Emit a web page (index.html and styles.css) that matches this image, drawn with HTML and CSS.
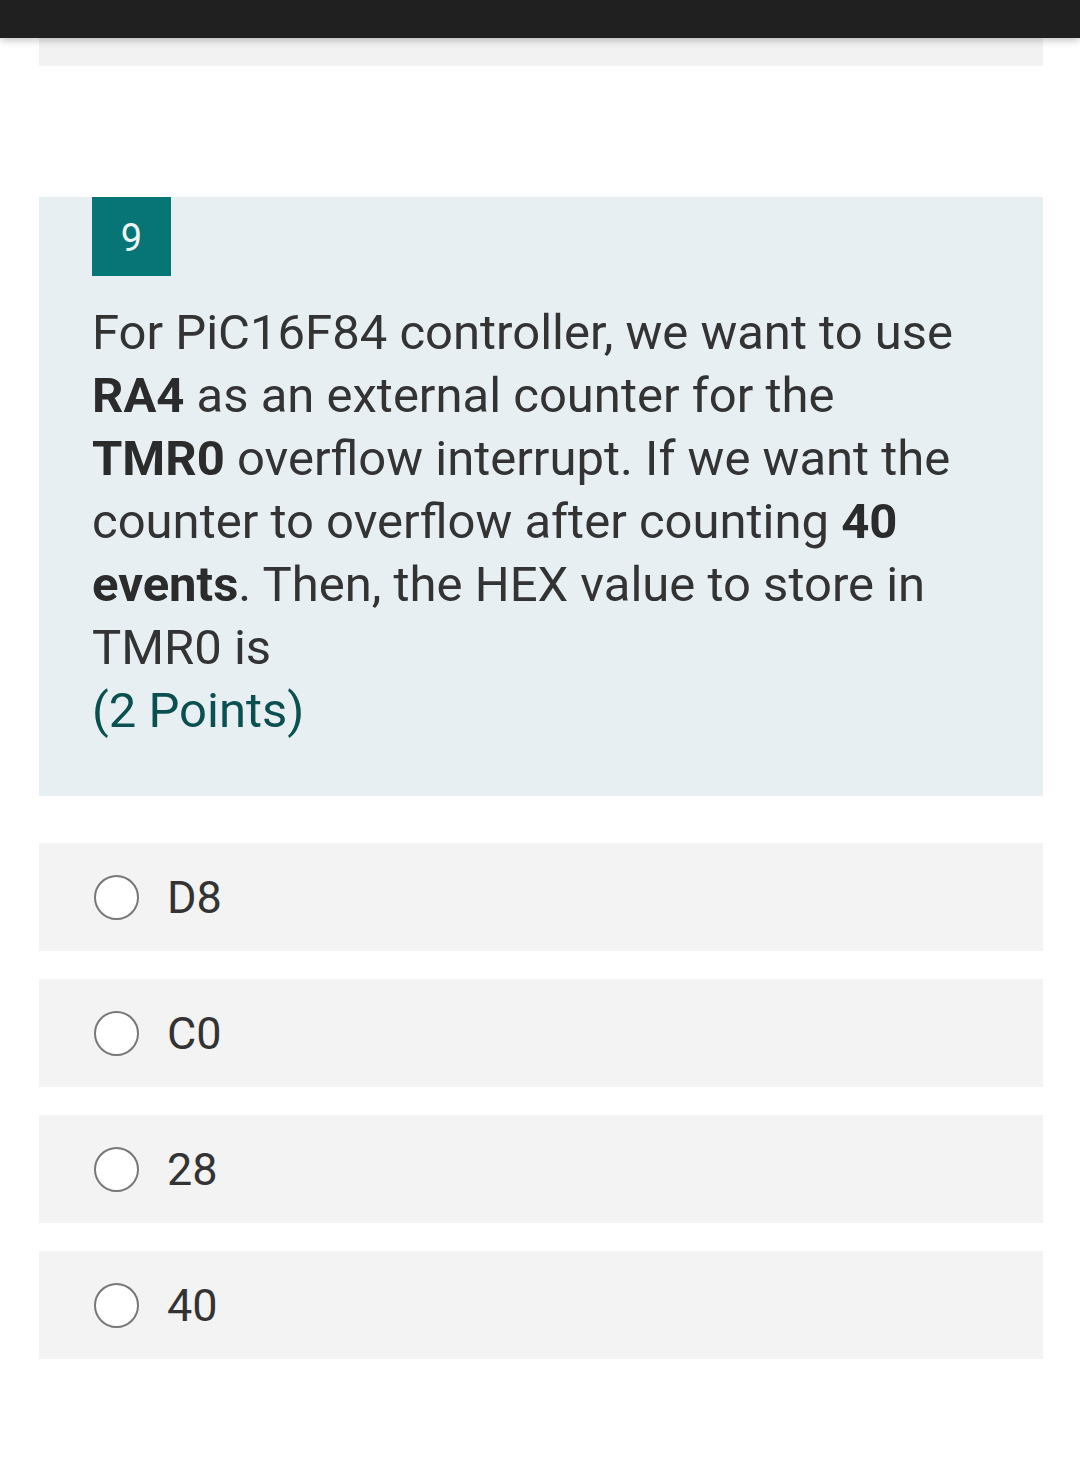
FILE: index.html
```html
<!DOCTYPE html>
<html>
<head>
<meta charset="utf-8">
<link rel="stylesheet" href="styles.css">
</head>
<body>
<div class="topbar"></div>
<div class="page">
  <div class="prev-card"></div>
  <div class="question">
    <div class="badge">9</div>
    <div class="qtext">For PiC16F84 controller, we want to use <b>RA4</b> as an external counter for the <b>TMR0</b> overflow interrupt. If we want the counter to overflow after counting <b>40 events</b>. Then, the HEX value to store in TMR0 is</div>
    <div class="points">(2 Points)</div>
  </div>
  <div class="options">
    <label class="option"><span class="radio"></span><span class="opt-text">D8</span></label>
    <label class="option"><span class="radio"></span><span class="opt-text">C0</span></label>
    <label class="option"><span class="radio"></span><span class="opt-text">28</span></label>
    <label class="option"><span class="radio"></span><span class="opt-text">40</span></label>
  </div>
</div>
</body>
</html>
```

FILE: styles.css
```css
* { box-sizing: border-box; }
html, body { margin: 0; padding: 0; background: #ffffff; }
body { font-family: Roboto, "Liberation Sans", sans-serif; color: #333333; }

.topbar {
  height: 38px;
  background: #202020;
  box-shadow: 0 2px 8px rgba(0,0,0,0.25);
  position: relative;
  z-index: 2;
}

.page {
  padding: 0 37px 0 39px;
}

.prev-card {
  height: 28px;
  background: #f2f2f2;
}

.question {
  margin-top: 131px;
  background: #e7eff3;
  padding: 0 80px 54px 53px;
}

.badge {
  width: 79px;
  height: 79px;
  background: #077575;
  color: #eef6f6;
  font-size: 38px;
  padding-top: 2px;
  display: flex;
  align-items: center;
  justify-content: center;
}

.qtext {
  margin-top: 25px;
  font-size: 49px;
  line-height: 63px;
  color: #333333;
}
.qtext b { font-weight: 700; color: #2b2b2b; }

.points {
  font-size: 49px;
  line-height: 63px;
  color: #0b5050;
}

.options {
  margin-top: 47px;
  display: flex;
  flex-direction: column;
  gap: 28px;
}

.option {
  height: 108px;
  background: #f3f3f3;
  display: flex;
  align-items: center;
  padding-left: 55px;
}

.radio {
  width: 45px;
  height: 45px;
  border-radius: 50%;
  border: 2.5px solid #777777;
  background: #ffffff;
  flex: none;
}

.opt-text {
  margin-left: 28px;
  font-size: 45px;
  color: #333333;
}
```
